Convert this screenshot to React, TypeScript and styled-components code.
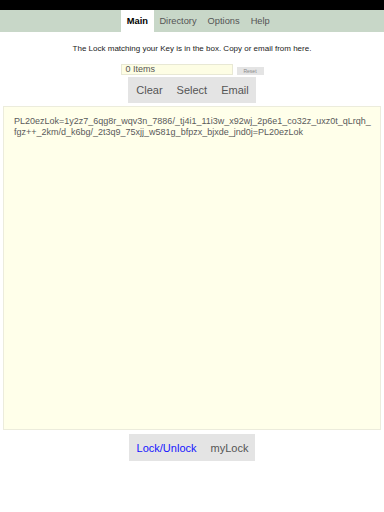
import React from "react";
import styled, { createGlobalStyle } from "styled-components";

const GlobalStyle = createGlobalStyle`
  html, body {
    margin: 0;
    padding: 0;
    background: #ffffff;
    font-family: "Liberation Sans", Arial, sans-serif;
  }
`;

const Page = styled.div`
  width: 384px;
  height: 512px;
  display: flex;
  flex-direction: column;
  align-items: center;
`;

const StatusBar = styled.div`
  width: 100%;
  height: 10px;
  background: #000;
`;

const NavBar = styled.nav`
  width: 100%;
  height: 22px;
  background: #c8d7c8;
  display: flex;
  justify-content: center;
  padding-left: 12px;
  box-sizing: border-box;
`;

const Tab = styled.div<{ $active?: boolean }>`
  display: flex;
  align-items: center;
  padding: 0 ${(p) => (p.$active ? "6px" : "5.5px")};
  font-size: 9.3px;
  color: ${(p) => (p.$active ? "#000" : "#555")};
  font-weight: ${(p) => (p.$active ? "bold" : "normal")};
  background: ${(p) => (p.$active ? "#fff" : "transparent")};
`;

const Message = styled.p`
  margin: 12px 0 0;
  font-size: 8px;
  color: #222;
`;

const CountRow = styled.div`
  margin-top: 11px;
  display: flex;
  align-items: flex-end;
  gap: 4px;
`;

const CountBox = styled.div`
  width: 112px;
  height: 11px;
  box-sizing: border-box;
  background: #fdfde4;
  border: 1px solid #e8e8d4;
  font-size: 9px;
  color: #555;
  line-height: 9px;
  padding-left: 4px;
`;

const ResetButton = styled.div`
  width: 27px;
  height: 8px;
  background: #e4e4e4;
  font-size: 5px;
  color: #888;
  text-align: center;
  line-height: 8px;
`;

const ButtonGroup = styled.div<{ $top?: number; $height?: number }>`
  display: flex;
  background: #e4e4e4;
  margin-top: ${(p) => p.$top ?? 0}px;
  height: ${(p) => p.$height ?? 26}px;
  align-items: center;
  padding: 0 7px 0 8px;
  gap: 14px;
`;

const ActionButton = styled.span<{ $link?: boolean }>`
  font-size: 11px;
  color: ${(p) => (p.$link ? "#1414ff" : "#555")};
`;

const LockBox = styled.div`
  margin-top: 3px;
  width: 378px;
  height: 324px;
  box-sizing: border-box;
  background: #ffffea;
  border: 1px solid #ececdc;
  padding: 9px 6px 9px 10px;
  font-size: 9px;
  line-height: 11px;
  color: #5a5a5a;
  overflow-wrap: anywhere;
`;

export default function App() {
  return (
    <Page>
      <GlobalStyle />
      <StatusBar />
      <NavBar>
        <Tab $active>Main</Tab>
        <Tab>Directory</Tab>
        <Tab>Options</Tab>
        <Tab>Help</Tab>
      </NavBar>
      <Message>The Lock matching your Key is in the box. Copy or email from here.</Message>
      <CountRow>
        <CountBox>0 Items</CountBox>
        <ResetButton>Reset</ResetButton>
      </CountRow>
      <ButtonGroup $top={2}>
        <ActionButton>Clear</ActionButton>
        <ActionButton>Select</ActionButton>
        <ActionButton>Email</ActionButton>
      </ButtonGroup>
      <LockBox>
        PL20ezLok=1y2z7_6qg8r_wqv3n_7886/_tj4i1_11i3w_x92wj_2p6e1_co32z_uxz0t_qLrqh_
        <wbr />
        fgz++_2km/d_k6bg/_2t3q9_75xjj_w581g_bfpzx_bjxde_jnd0j=PL20ezLok
      </LockBox>
      <ButtonGroup $top={4} $height={27}>
        <ActionButton $link>Lock/Unlock</ActionButton>
        <ActionButton>myLock</ActionButton>
      </ButtonGroup>
    </Page>
  );
}
